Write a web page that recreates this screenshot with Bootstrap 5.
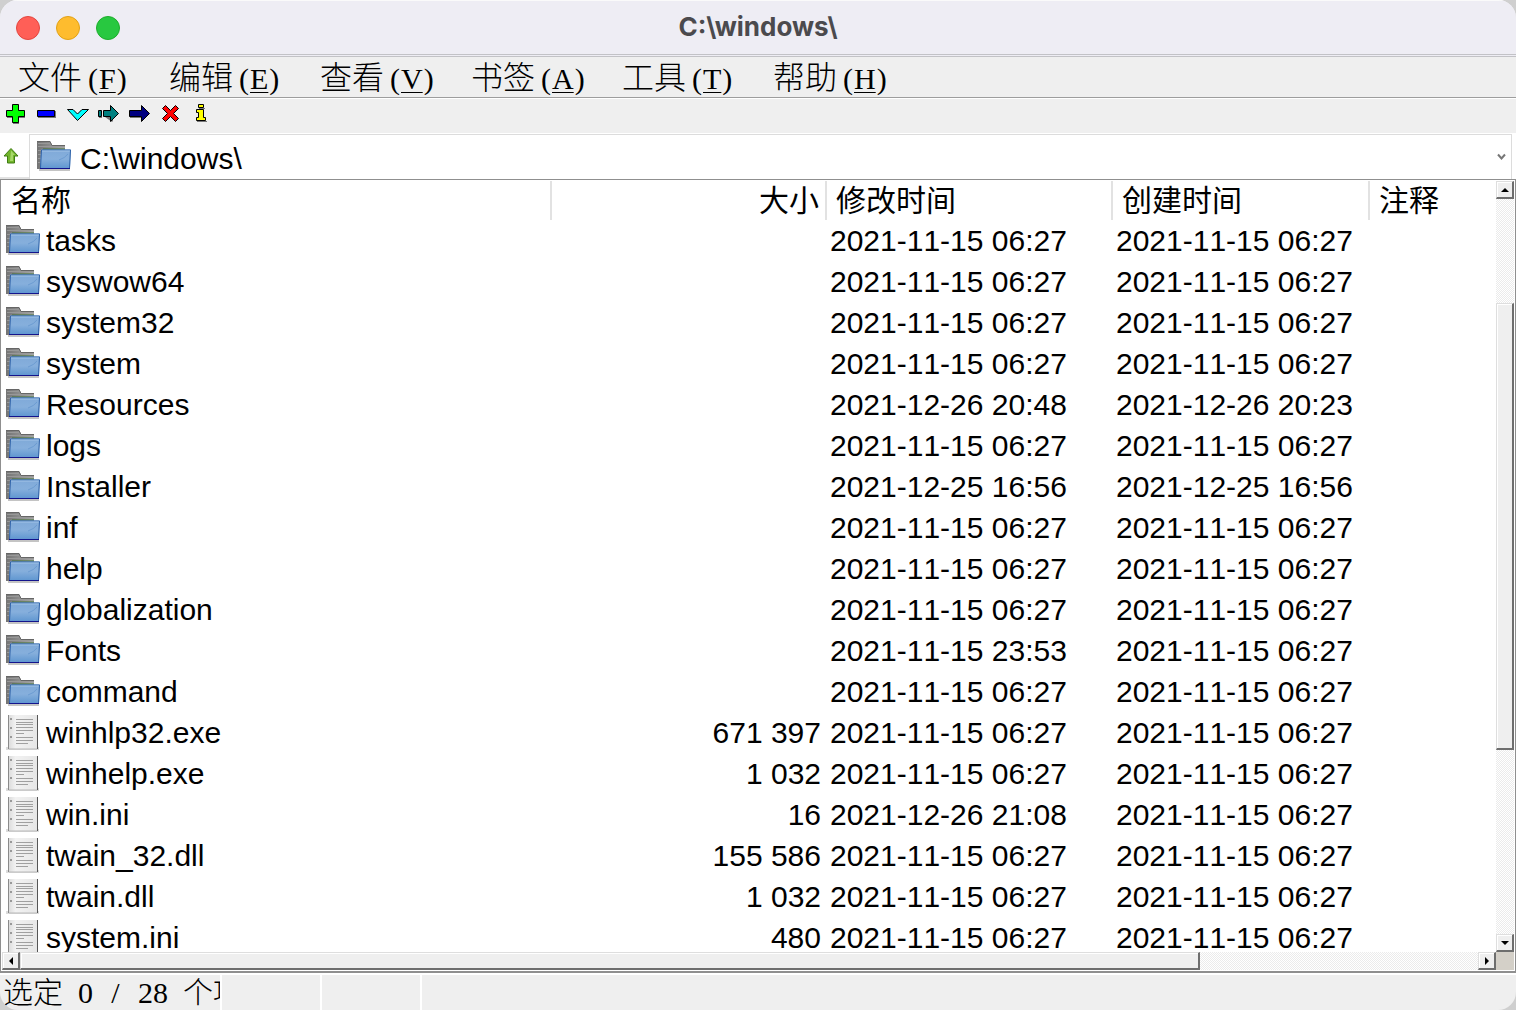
<!DOCTYPE html>
<html lang="zh-CN">
<head>
<meta charset="utf-8">
<meta name="viewport" content="width=device-width, initial-scale=1">
<title>C:\windows\</title>
<link rel="stylesheet" href="https://cdn.jsdelivr.net/npm/bootstrap@5.3.0/dist/css/bootstrap.min.css">
<style>
body{background:#cfcfcf;color:#000;font-family:"Liberation Sans","Noto Sans CJK SC",sans-serif;font-size:30px;line-height:41px;font-kerning:none}
.win{background:#efefef;border-radius:18px;overflow:hidden}
.titlebar{background:#eeedf4;height:57px;border-top:1px solid #fafafa;border-bottom:3px double #c2c2c6}
.lights{gap:16px;left:16px;top:15px}
.light{width:24px;height:24px;border-radius:50%;border:1px solid #e2463f;background:#ff5f57;padding:0}
.light.min{background:#febc2e;border-color:#e1a116}
.light.max{background:#28c840;border-color:#1dad2b}
.wtitle{font:bold 26px/52px Inter,sans-serif;color:#4b4a4d;margin:0}
.menubar{height:41px;padding-left:18px;border-bottom:1px solid #9d9d9d}
.menubar a{width:151px;font-family:"Liberation Serif","Noto Sans CJK SC",serif;font-weight:300;font-size:32px;line-height:42px;height:40px;color:#000;text-decoration:none;white-space:nowrap}
.acc{padding-left:6px;font-size:30px}
.acc u{text-decoration-thickness:1px;text-underline-offset:3px;margin:0 1px}
.toolbar{height:35px;border-top:1px solid #fff;padding-left:5px;gap:9px}
.tool{border:0;background:none;padding:0;width:22px;height:22px;display:flex;margin-top:-4px}
.addr{background:#fff;height:46px;padding-right:4px}
.upbtn{width:29px;border:0;border-bottom:2px solid #e2e2e2;background:#fff;padding:2px 0 0 2px}
.combo{border:1px solid #dcdcdc;border-bottom:0;margin-top:1px;padding-left:7px;padding-right:5px}
.combo input{border:0;outline:0;padding:3px 0 0;font-size:30px;line-height:40px;color:#000;min-width:0}
.pane{background:#fff;border:2px solid #8f8f8f;border-width:1px 1px 2px 1px;padding:1px;flex:1;min-height:0}
.listing{overflow:hidden;min-width:0}
.files{table-layout:fixed;width:1494px;border-collapse:collapse}
.files th{font-weight:400;height:39px;line-height:39px;padding:0 6px 0 9px;border-right:2px solid #e2e2e2;white-space:nowrap}
.files th:last-child{border:0}
.files td{height:41px;line-height:30px;padding:0 5px 0 4px;white-space:nowrap}
.files .nm{padding-left:4px}
.num{text-align:right}
.nm svg{display:block;margin-right:5px}
.track{background:repeating-conic-gradient(#fff 0 25%,#ebebeb 0 50%) 0 0/2px 2px}
.vbar{width:18px}
.hbar{height:18px}
.sbtn,.thumb{background:#efefef;border:solid;border-color:#dedede #6e6e6e #6e6e6e #dedede;border-width:1px 2px 2px 1px;padding:0;display:flex;align-items:center;justify-content:center;flex:none;box-shadow:inset 1px 1px #fff}
.sbtn{width:18px;height:18px}
.corner{width:18px;background:#d4d0c8}
.status{height:37px;border-top:2px solid #fff;font-family:"Liberation Serif","Noto Sans CJK SC",serif;font-weight:300;line-height:36px}
.cell{border-right:2px solid #fff;overflow:hidden;white-space:nowrap;width:100px;flex:none}
.cell.first{width:222px;padding-left:3px;gap:15px}
.slash{width:15px;text-align:center}
.cell.first span{flex:none}
</style>
<script src="https://cdn.jsdelivr.net/npm/bootstrap@5.3.0/dist/js/bootstrap.bundle.min.js"></script>
</head>
<body>
<svg width="0" height="0" class="position-absolute" aria-hidden="true">
<defs>
<linearGradient id="gb" x1="0" y1="0" x2="0" y2="1"><stop offset="0" stop-color="#7fa9d8"/><stop offset=".5" stop-color="#86afdc"/><stop offset="1" stop-color="#5f96d0"/></linearGradient>
<linearGradient id="gg" x1="0" y1="0" x2="1" y2="0"><stop offset="0" stop-color="#747474"/><stop offset="1" stop-color="#a8a8a8"/></linearGradient>
<linearGradient id="gp" x1="0" y1="0" x2="1" y2="0"><stop offset="0" stop-color="#d9d9d9"/><stop offset=".25" stop-color="#f2f2f2"/><stop offset="1" stop-color="#e6e6e6"/></linearGradient>
<symbol id="folder" viewBox="0 0 35 32">
<path d="M2 29h31" stroke="#c4c4c4" stroke-width="2"/>
<path d="M0 0h13l2 4h13v24H0z" fill="url(#gg)"/>
<path d="M0 .5h13l2 4h13" fill="none" stroke="#666"/>
<path d="M1 2.500h12M1 5.500h27M1 9.500h3M1 13.500h3M1 17.500h3M1 21.500h3" stroke="#989898"/>
<path d="M6 8h22" stroke="#3f7031"/>
<path d="M4 8.500h30L33 27.500H3z" fill="url(#gb)"/>
<path d="M4.500 9h29" stroke="#2f62a8"/>
<path d="M5 10h28" stroke="#a3c4e8"/>
<path d="M4.500 9L3.500 27M33.500 9l-1 18" stroke="#2f62a8"/>
<path d="M3 27.500h30" stroke="#14148c"/>
<path d="M22 19q6-2 9-6" stroke="#6c9cd2" fill="none"/>
</symbol>
<symbol id="doc" viewBox="0 0 35 36">
<path d="M0 33.500h33" stroke="#dcdcdc" stroke-width="3"/>
<path d="M2 0h30v34H2z" fill="url(#gp)"/>
<path d="M2.500 0v34" stroke="#8a8a8a"/><path d="M31.500 0v34" stroke="#555"/>
<path d="M3 34h28" stroke="#b9b9b9"/>
<path d="M10 4.500h17M10 7.500h17M10 9.500h17M10 12.500h17M10 15.500h17M10 18.500h8M10 22.500h17M10 25.500h17M10 28.500h12" stroke="#a0a0a0"/>
<path d="M4 3h2v2H4zM4 12h2v2H4zM4 21h2v2H4z" fill="#999"/>
</symbol>
</defs>
</svg>
<main class="win d-flex flex-column vh-100">
<header class="titlebar position-relative text-center flex-shrink-0">
<div class="lights position-absolute d-flex"><button class="light" aria-label="关闭"></button><button class="light min" aria-label="最小化"></button><button class="light max" aria-label="缩放"></button></div>
<h1 class="wtitle">C:\windows\</h1>
</header>
<nav class="menubar d-flex flex-shrink-0">
<a href="#">文件<span class="acc">(<u>F</u>)</span></a><a href="#">编辑<span class="acc">(<u>E</u>)</span></a><a href="#">查看<span class="acc">(<u>V</u>)</span></a><a href="#">书签<span class="acc">(<u>A</u>)</span></a><a href="#">工具<span class="acc">(<u>T</u>)</span></a><a href="#">帮助<span class="acc">(<u>H</u>)</span></a>
</nav>
<div class="toolbar d-flex align-items-center flex-shrink-0" role="toolbar">
<button class="tool" aria-label="添加"><svg width="22" height="22"><path d="M8 3h6v5h6v7h-6v6H8v-6H2V9h6z" fill="#777"/><path d="M7.500 1.500h6v6h6v6h-6v6h-6v-6h-6v-6h6z" fill="#0f0" stroke="#000"/></svg></button>
<button class="tool" aria-label="提取"><svg width="22" height="22"><path d="M2 8h18v7H2z" fill="#777"/><path d="M1.500 7.500h17v6h-17z" fill="#00f" stroke="#000"/></svg></button>
<button class="tool" aria-label="测试"><svg width="22" height="22"><path d="M.5 6.500h5.500l4.500 4.500 4.500-4.500h6.500l-11 11z" fill="#0ff" stroke="#000"/></svg></button>
<button class="tool" aria-label="复制"><svg width="22" height="22"><path d="M1 14h3v1H1zM7 14h8v4l-1 1z" fill="#777"/><path d="M.5 7.500h3v6h-3zM5.500 7.500h7v-5l8 8-8 8v-5h-7z" fill="#008080" stroke="#000"/></svg></button>
<button class="tool" aria-label="移动"><svg width="22" height="22"><path d="M1 14h13v1H1z" fill="#777"/><path d="M.5 7.500h12v-5l8 8-8 8v-5h-12z" fill="#000080" stroke="#000"/></svg></button>
<button class="tool" aria-label="删除"><svg width="22" height="22"><path d="M2.500 5.500l3-3 5 5 5-5 3 3-5 5 5 5-3 3-5-5-5 5-3-3 5-5z" fill="#f00" stroke="#000"/></svg></button>
<button class="tool" aria-label="信息"><svg width="22" height="22"><path d="M8 5h6v1H8zM6 18h10v1H6z" fill="#777"/><path d="M7.500 1.500h5v3h-5zM5.500 6.500h7v8h2v3h-9v-3h2v-5h-2z" fill="#ff0" stroke="#000"/></svg></button>
</div>
<div class="addr d-flex flex-shrink-0">
<button class="upbtn d-flex align-items-center" aria-label="上一级"><svg width="18" height="18"><path d="M9 1.500l7 7.500h-3.500v7h-7V9H2z" fill="#73b52c" stroke="#3f7d12"/><path d="M9 3.500l4 4.500h-2v6H8z" fill="#a7d86a"/></svg></button>
<div class="combo d-flex align-items-center flex-fill"><svg width="35" height="32"><use href="#folder"/></svg><input class="flex-fill ms-2" aria-label="路径" value="C:\windows\"><svg width="9" height="8"><path d="M1 1.500l3.500 4L8 1.500" fill="none" stroke="#777" stroke-width="2"/></svg></div>
</div>
<div class="pane d-flex flex-column">
<div class="d-flex flex-fill" style="min-height:0">
<div class="listing flex-fill">
<table class="files">
<colgroup><col style="width:549px"><col style="width:275px"><col style="width:286px"><col style="width:257px"><col></colgroup>
<thead><tr><th>名称</th><th class="num">大小</th><th>修改时间</th><th>创建时间</th><th>注释</th></tr></thead>
<tbody id="rows"></tbody>
</table>
</div>
<div class="vbar track d-flex flex-column flex-shrink-0">
<button class="sbtn" aria-label="向上"><svg width="8" height="4"><path d="M0 4l4-4 4 4z"/></svg></button>
<div style="flex:105"></div><div class="thumb" style="flex:447"></div><div style="flex:185"></div>
<button class="sbtn" aria-label="向下"><svg width="8" height="4"><path d="M0 0l4 4 4-4z"/></svg></button>
</div>
</div>
<div class="hbar track d-flex flex-shrink-0">
<button class="sbtn" aria-label="向左"><svg width="4" height="8"><path d="M4 0L0 4l4 4z"/></svg></button>
<div class="thumb" style="flex:1180"></div><div style="flex:279"></div>
<button class="sbtn" aria-label="向右"><svg width="4" height="8"><path d="M0 0l4 4-4 4z"/></svg></button>
<div class="corner"></div>
</div>
</div>
<footer class="status d-flex flex-shrink-0"><div class="cell first d-flex"><span>选定</span> <span>0</span> <span class="slash">/</span> <span>28</span> <span>个项</span></div><div class="cell"></div><div class="cell"></div></footer>
</main>
<script>
const D="2021-11-15 06:27";
const rows=[["tasks"],["syswow64"],["system32"],["system"],["Resources","","2021-12-26 20:48","2021-12-26 20:23"],["logs"],["Installer","","2021-12-25 16:56","2021-12-25 16:56"],["inf"],["help"],["globalization"],["Fonts","","2021-11-15 23:53"],["command"],["winhlp32.exe","671 397"],["winhelp.exe","1 032"],["win.ini","16","2021-12-26 21:08"],["twain_32.dll","155 586"],["twain.dll","1 032"],["system.ini","480"]];
document.getElementById("rows").innerHTML=rows.map(([n,s="",m=D,c=D])=>`<tr><td class="nm"><div class="d-flex align-items-center"><svg width="35" height="${s?36:32}"><use href="#${s?"doc":"folder"}"/></svg>${n}</div></td><td class="num">${s}</td><td>${m}</td><td>${c}</td><td></td></tr>`).join("");
</script>
</body>
</html>
